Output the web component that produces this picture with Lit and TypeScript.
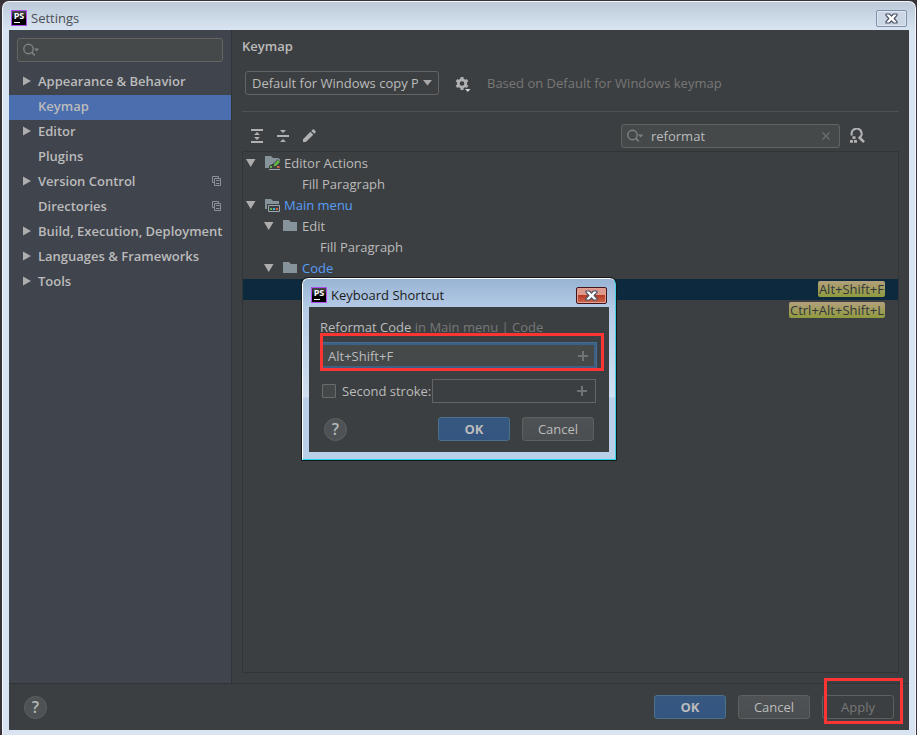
import { LitElement, html, css, svg, nothing } from "lit";
import { customElement } from "lit/decorators.js";
import { classMap } from "lit/directives/class-map.js";

const controls = css`
  * { box-sizing: border-box; }
  button, input, select { font: inherit; color: inherit; margin: 0; }
  .btn {
    width: 72px; height: 24px; padding: 0;
    border: 1px solid #5e6060; border-radius: 3px;
    background: linear-gradient(#4e5254, #4a4e50); color: #bbbbbb;
  }
  .btn.primary { border-color: #4c708c; background: linear-gradient(#365880, #345580); font-weight: 700; }
  .btn:disabled { background: transparent; color: #777777; }
  .help {
    width: 23px; height: 23px; padding: 0; flex: none;
    border: 1px solid #5e6163; border-radius: 50%;
    background: #4e5254; color: #b4b8ba; font-size: 16px; font-weight: 600; line-height: 20px;
  }
  .icon { display: block; flex: none; }
  .icon-btn { padding: 0; border: 0; background: none; display: block; flex: none; }
`;

const folder = svg`<path d="M0 1h6l2 2h6v9H0z" fill="#87939a"/>`;

const searchIcon = html`<svg class="icon" width="18" height="14" viewBox="0 0 18 14" aria-hidden="true">
  <circle cx="5.500" cy="6" r="4.700" fill="none" stroke="#7d8487" stroke-width="1.400"/>
  <path d="M8.800 9.300L11.700 12.400" stroke="#7d8487" stroke-width="1.600"/>
  <path d="M11 5.600h5.200L13.600 8.600z" fill="#7d8487"/></svg>`;

const closeGlyph = html`<svg class="icon" width="13" height="11" viewBox="0 0 13 11" aria-hidden="true">
  <path d="M1 1h3.600l1.900 2.200L8.400 1H12v1.300L9.200 5.500 12 8.700V10H8.400L6.500 7.800 4.600 10H1V8.700L3.800 5.500 1 2.300z"
    fill="#fff" stroke="#4b5266" stroke-width="1.200" stroke-linejoin="round"/></svg>`;

@customElement("product-logo")
export class ProductLogo extends LitElement {
  static styles = css`
    :host {
      display: block; flex: none; box-sizing: border-box; width: 16px; height: 16px;
      border: 1px solid #b04df0; background: linear-gradient(#4a4a4a, #000 60%);
      color: #fff; font: 700 9px/9px "Open Sans", sans-serif; text-align: center;
    }
    .bar { width: 6px; height: 1px; margin: 2px 0 0 2px; background: #fff; }
  `;
  render() { return html`PS<div class="bar"></div>`; }
}

@customElement("settings-nav")
export class SettingsNav extends LitElement {
  static styles = [controls, css`
    :host { display: block; background: #40444d; border-right: 1px solid #323537; padding: 8px 0; }
    .search {
      display: flex; align-items: center; height: 24px; margin: 0 8px 8px; padding: 0 5px;
      border: 1px solid #646464; border-radius: 3px; background: #45494a;
    }
    input { flex: 1; min-width: 0; border: 0; background: none; outline: 0; }
    ul { margin: 0; padding: 0; list-style: none; }
    a {
      display: flex; align-items: center; height: 25px; padding: 0 9px 3px 14px;
      color: #bbbbbb; font-weight: 600; text-decoration: none; white-space: nowrap;
    }
    a.current { background: #4b6eaf; }
    .arrow { width: 15px; flex: none; }
    .label { flex: 1; }
  `];
  items = [
    { label: "Appearance & Behavior", open: true },
    { label: "Keymap", current: true },
    { label: "Editor", open: true },
    { label: "Plugins" },
    { label: "Version Control", open: true, scoped: true },
    { label: "Directories", scoped: true },
    { label: "Build, Execution, Deployment", open: true },
    { label: "Languages & Frameworks", open: true },
    { label: "Tools", open: true },
  ] as { label: string; open?: boolean; current?: boolean; scoped?: boolean }[];
  render() {
    return html`
      <label class="search">${searchIcon}<input type="text" aria-label="Search settings" /></label>
      <nav><ul>${this.items.map(i => html`<li>
        <a href="#" class=${classMap({ current: !!i.current })}>
          <svg class="icon arrow" width="15" height="10" viewBox="0 0 15 10" aria-hidden="true">
            ${i.open ? svg`<path d="M0 .5L8 5 0 9.500z" fill="#adadad"/>` : nothing}</svg>
          <span class="label">${i.label}</span>
          ${i.scoped ? html`<svg class="icon" width="10" height="10" viewBox="0 0 10 10" aria-hidden="true">
            <path d="M2.500 6.500h-2v-6h6v2M2.500 2.500h6v7h-6zM4 4.500h3.500M4 7.500h3.500" fill="none" stroke="#8b9196"/></svg>` : nothing}
        </a></li>`)}</ul></nav>`;
  }
}

type Row = { label?: string; depth: number; icon?: "actions" | "menu" | "folder"; blue?: boolean; keys?: string; selected?: boolean };

@customElement("keymap-tree")
export class KeymapTree extends LitElement {
  static styles = [controls, css`
    :host { display: block; border: 1px solid #323537; padding-top: 1px; }
    ul { margin: 0; padding: 0; list-style: none; }
    .row { display: flex; align-items: center; height: 21px; padding: 0 13px 1px 0; white-space: nowrap; }
    .row.selected { background: #0d293e; }
    .d0 { padding-left: 3px; }
    .d1 { padding-left: 21px; }
    .d2 { padding-left: 59px; }
    .d3 { padding-left: 77px; }
    .toggle { width: 19px; }
    .blue { color: #589df6; }
    .label { flex: 1; }
    .toggle + .icon { margin-right: 3px; }
    .keys {
      height: 16px; padding: 0 1px; border-radius: 2px; line-height: 16px;
      background: linear-gradient(#b3a07c, #8f9a3e); color: #33373a;
    }
  `];
  rows: Row[] = [
    { label: "Editor Actions", depth: 0, icon: "actions" },
    { label: "Fill Paragraph", depth: 2 },
    { label: "Main menu", depth: 0, icon: "menu", blue: true },
    { label: "Edit", depth: 1, icon: "folder" },
    { label: "Fill Paragraph", depth: 3 },
    { label: "Code", depth: 1, icon: "folder", blue: true },
    { label: "", depth: 3, keys: "Alt+Shift+F", selected: true },
    { label: "", depth: 3, keys: "Ctrl+Alt+Shift+L" },
  ];
  icon(kind: Row["icon"]) {
    return html`<svg class="icon" width="16" height="14" viewBox="0 0 16 14" aria-hidden="true">
      ${kind === "actions" ? svg`<path d="M0 0h6l2 2h6v10H0z" fill="#87939a"/><path d="M4 14v-4l5-3 4-4h3v11z" fill="#3c3f41"/>
        <path d="M8.500 10.500l1-3 3.500-3.500 2 2-4 4z" fill="#62b543"/><path d="M13 3.500l1-.8 1.400 1.400-.8 1z" fill="#9aa7b0"/>
        <path d="M5 10h2v2H5z" fill="#62b543"/><path d="M12 10h2.500v2H12z" fill="#d9653b"/><path d="M4 13h11v1H4z" fill="#9aa7b0"/>` : nothing}
      ${kind === "menu" ? svg`<path d="M0 1h6l2 2h6v3H2v5H0z" fill="#87939a"/>
        <path d="M3.500 7.500h11v6h-11z" fill="#3c3f41" stroke="#9aa7b0"/><path d="M5 10h2v2H5z" fill="#62b543"/>
        <path d="M8 10h2v2H8z" fill="#40b6e0"/><path d="M11 10h2v2h-2z" fill="#d9653b"/>` : nothing}
      ${kind === "folder" ? folder : nothing}</svg>`;
  }
  render() {
    return html`<ul role="tree" aria-label="Keymap actions">${this.rows.map(r => html`
      <li role="treeitem" class=${classMap({ row: true, selected: !!r.selected, ["d" + r.depth]: true })}>
        ${r.icon ? html`<button class="icon-btn toggle" aria-label="Collapse">
          <svg class="icon" width="10" height="10" viewBox="0 0 10 10"><path d="M0 1h9.500L4.700 9z" fill="#adadad"/></svg></button>
          ${this.icon(r.icon)}` : nothing}
        <span class=${classMap({ label: true, blue: !!r.blue })}>${r.label}</span>
        ${r.keys ? html`<span class="keys">${r.keys}</span>` : nothing}
      </li>`)}</ul>`;
  }
}

@customElement("shortcut-dialog")
export class ShortcutDialog extends LitElement {
  static styles = [controls, css`
    :host {
      display: block; box-sizing: border-box; width: 314px; padding: 0 6px 7px;
      border: 1px solid #fff; border-right-color: #3fd3e6; border-bottom-color: #20d8ea;
      border-radius: 6px 6px 0 0; outline: 1px solid #16191b;
      background: linear-gradient(#98b4d4, #b5cbe6 30px, #cfdff0 118px, #b9cfe8 119px);
    }
    header { display: flex; align-items: center; gap: 4px; height: 28px; padding: 4px 2px 0 2px; color: #1b1b1b; }
    h2 { flex: 1; margin: 0; font-size: 13px; font-weight: 400; }
    .close {
      display: flex; align-items: center; justify-content: center; width: 31px; height: 17px; padding: 0;
      border: 1px solid #43141c; border-radius: 2px; box-shadow: inset 0 0 0 1px #e2a093;
      background: linear-gradient(#dd9a8c 45%, #b83a24 50%, #cc6a50);
    }
    .body { background: #3c3f41; padding: 9px 12px 11px 11px; }
    .caption { margin: 0; line-height: 22px; }
    .muted { color: #777777; }
    .marked { position: relative; margin-top: 4px; }
    .mark { position: absolute; inset: -9px -7px -2px 0; border: 3px solid #fb3434; pointer-events: none; }
    .field { display: flex; align-items: center; height: 24px; padding: 0 7px; border: 1px solid #646464; background: #45494a; }
    .field input { flex: 1; min-width: 0; padding: 0; border: 0; outline: 0; background: none; }
    .focused { height: 27px; border: 1px solid #466d94; box-shadow: inset 0 0 0 2px #3d6185; }
    .second { display: flex; align-items: center; margin: 10px 1px 0 2px; }
    .second label { width: 96px; padding-left: 6px; white-space: nowrap; }
    .second .field { flex: 1; min-width: 0; background: #3c3f41; }
    .check { appearance: none; width: 14px; height: 14px; flex: none; border: 1px solid #6b6b6b; background: #43494a; border-radius: 1px; }
    footer { display: flex; align-items: center; gap: 12px; margin: 14px 3px 0 4px; }
    .space { flex: 1; }
  `];
  plus = html`<svg class="icon" width="12" height="12" viewBox="0 0 12 12" aria-hidden="true">
    <path d="M6 1v10M1 6h10" stroke="#6f7375" stroke-width="2"/></svg>`;
  render() {
    return html`
      <header><product-logo></product-logo><h2>Keyboard Shortcut</h2>
        <button class="close" aria-label="Close">${closeGlyph}</button></header>
      <div class="body">
        <p class="caption">Reformat Code <span class="muted">in Main menu | Code</span></p>
        <div class="marked">
          <div class="field focused"><input type="text" aria-label="First stroke" value="Alt+Shift+F" />${this.plus}</div>
          <div class="mark"></div>
        </div>
        <div class="second">
          <input class="check" type="checkbox" id="second" /><label for="second">Second stroke:</label>
          <div class="field"><input type="text" aria-label="Second stroke keys" />${this.plus}</div>
        </div>
        <footer><button class="help" aria-label="Help">?</button><span class="space"></span>
          <button class="btn primary">OK</button><button class="btn">Cancel</button></footer>
      </div>`;
  }
}

@customElement("app-root")
export class AppRoot extends LitElement {
  static styles = [controls, css`
    :host {
      display: block; position: relative; min-height: 100vh; background: #383338;
      color: #bbbbbb; font: 13px/18px "Open Sans", "Noto Sans CJK SC", sans-serif;
    }
    .shell { display: flex; min-height: 100vh; padding: 1px 1px 0 2px; }
    .window {
      flex: 1; min-width: 0; display: flex; flex-direction: column; padding: 0 6px 5px;
      border: 1px solid #f2f5f9; border-bottom: 0; border-radius: 7px 7px 0 0;
      background: linear-gradient(#bccad9, #d8e4f1 28px);
    }
    .titlebar { display: flex; align-items: center; gap: 4px; height: 28px; padding: 4px 2px 0 2px; color: #4b4f55; }
    h1 { flex: 1; margin: 0; font-size: 13px; font-weight: 400; }
    .close {
      display: flex; align-items: center; justify-content: center; width: 31px; height: 17px; padding: 0;
      border: 1px solid #8190ad; border-radius: 2px; background: #cbd7e5; box-shadow: inset 0 0 0 1px #dde6f0;
    }
    .content { flex: 1; display: flex; background: #3c3f41; }
    settings-nav { width: 223px; flex: none; }
    main { flex: 1; min-width: 0; display: flex; flex-direction: column; padding: 7px 10px 10px; }
    h2 { margin: 0; font-size: 13px; font-weight: 600; }
    .scheme { display: flex; align-items: center; height: 24px; margin: 16px 0 0 3px; white-space: nowrap; }
    .select { position: relative; width: 194px; flex: none; }
    select {
      display: block; width: 100%; height: 24px; appearance: none; padding: 0 20px 0 6px;
      border: 1px solid #646464; border-radius: 3px; background: #3c3f41;
    }
    .chevron { position: absolute; right: 7px; top: 9px; pointer-events: none; }
    .gear { margin: 4px 16px 0; }
    .muted { color: #777777; }
    hr { width: 100%; height: 1px; margin: 16px 0 12px; border: 0; background: #515151; }
    .toolbar { display: flex; align-items: center; gap: 10px; height: 24px; margin-bottom: 3px; padding: 0 34px 0 7px; }
    .search {
      display: flex; align-items: center; gap: 6px; width: 219px; height: 24px; margin: 0 -1px 0 auto; padding: 0 8px 0 5px;
      border: 1px solid #646464; border-radius: 3px; background: #45494a;
    }
    .search input { flex: 1; min-width: 0; padding: 0; border: 0; outline: 0; background: none; }
    keymap-tree { flex: 1; }
    .footer {
      display: flex; align-items: center; gap: 12px; height: 47px; padding: 0 15px;
      border-top: 1px solid #323537; background: #3c3f41;
    }
    .space { flex: 1; }
    .marked { position: relative; display: flex; }
    .mark { position: absolute; inset: -17px -9px -5px 2px; border: 3px solid #fb3434; pointer-events: none; }
    shortcut-dialog { position: absolute; left: 302px; top: 278px; }
  `];
  render() {
    return html`
      <div class="shell"><div class="window">
        <header class="titlebar"><product-logo></product-logo><h1>Settings</h1>
          <button class="close" aria-label="Close">${closeGlyph}</button></header>
        <div class="content">
          <settings-nav></settings-nav>
          <main>
            <h2>Keymap</h2>
            <div class="scheme">
              <div class="select"><select aria-label="Keymap scheme"><option>Default for Windows copy Project</option></select>
                <svg class="icon chevron" width="9" height="6" viewBox="0 0 9 6" aria-hidden="true"><path d="M0 0h9L4.500 5.500z" fill="#a5a7a8"/></svg></div>
              <button class="icon-btn gear" aria-label="Scheme actions">
                <svg class="icon" width="16" height="16" viewBox="0 0 16 16">
                  <circle cx="7" cy="6.500" r="3.700" fill="none" stroke="#afb1b3" stroke-width="2.800"/>
                  <path d="M7 0v2.500M7 10.500V13M1.400 3.200l2.200 1.300M10.400 8.500l2.200 1.300M1.400 9.800l2.200-1.300M10.400 4.500l2.200-1.300" stroke="#afb1b3" stroke-width="3"/>
                  <path d="M10 12h5.500l-2.700 3z" fill="#d0d2d3"/></svg></button>
              <span class="muted">Based on Default for Windows keymap</span>
            </div>
            <hr />
            <div class="toolbar">
              <button class="icon-btn" aria-label="Expand all"><svg class="icon" width="16" height="16" viewBox="0 0 16 16">
                <path d="M2 1h12v2H2zM2 13h12v2H2zM8 4l3 3H5zM8 12l3-3H5z" fill="#afb1b3"/></svg></button>
              <button class="icon-btn" aria-label="Collapse all"><svg class="icon" width="16" height="16" viewBox="0 0 16 16">
                <path d="M2 7h12v2H2zM5 2h6L8 5zM5 14h6l-3-3z" fill="#afb1b3"/></svg></button>
              <button class="icon-btn" aria-label="Edit shortcut"><svg class="icon" width="16" height="16" viewBox="0 0 16 16">
                <path d="M2 11.200L9.400 3.800l2.900 2.900L4.900 14H2zM10.300 2.900l1.300-1.300q.7-.6 1.400 0l1.500 1.500q.6.700 0 1.400l-1.300 1.300z" fill="#afb1b3"/></svg></button>
              <div class="search">${searchIcon}<input type="text" aria-label="Search actions" value="reformat" />
                <button class="icon-btn" aria-label="Clear"><svg class="icon" width="10" height="10" viewBox="0 0 10 10">
                  <path d="M1.500 1.500l7 7M8.500 1.500l-7 7" stroke="#6c7072" stroke-width="1.200"/></svg></button></div>
              <button class="icon-btn" aria-label="Find actions by shortcut"><svg class="icon" width="16" height="16" viewBox="0 0 16 16">
                <path d="M3 7.500A5 5 0 1 1 9.500 10.300" fill="none" stroke="#afb1b3" stroke-width="2.200"/>
                <path d="M10.500 9.500L15 14.200" stroke="#afb1b3" stroke-width="2.600"/>
                <path d="M3.500 8.300h3v2.700h-3zM1 12h3v2.700H1zM5 12h3v2.700H5z" fill="#afb1b3"/></svg></button>
            </div>
            <keymap-tree></keymap-tree>
          </main>
        </div>
        <footer class="footer">
          <button class="help" aria-label="Help">?</button><span class="space"></span>
          <button class="btn primary">OK</button><button class="btn">Cancel</button>
          <div class="marked"><button class="btn" disabled>Apply</button><div class="mark"></div></div>
        </footer>
      </div></div>
      <shortcut-dialog></shortcut-dialog>`;
  }
}
